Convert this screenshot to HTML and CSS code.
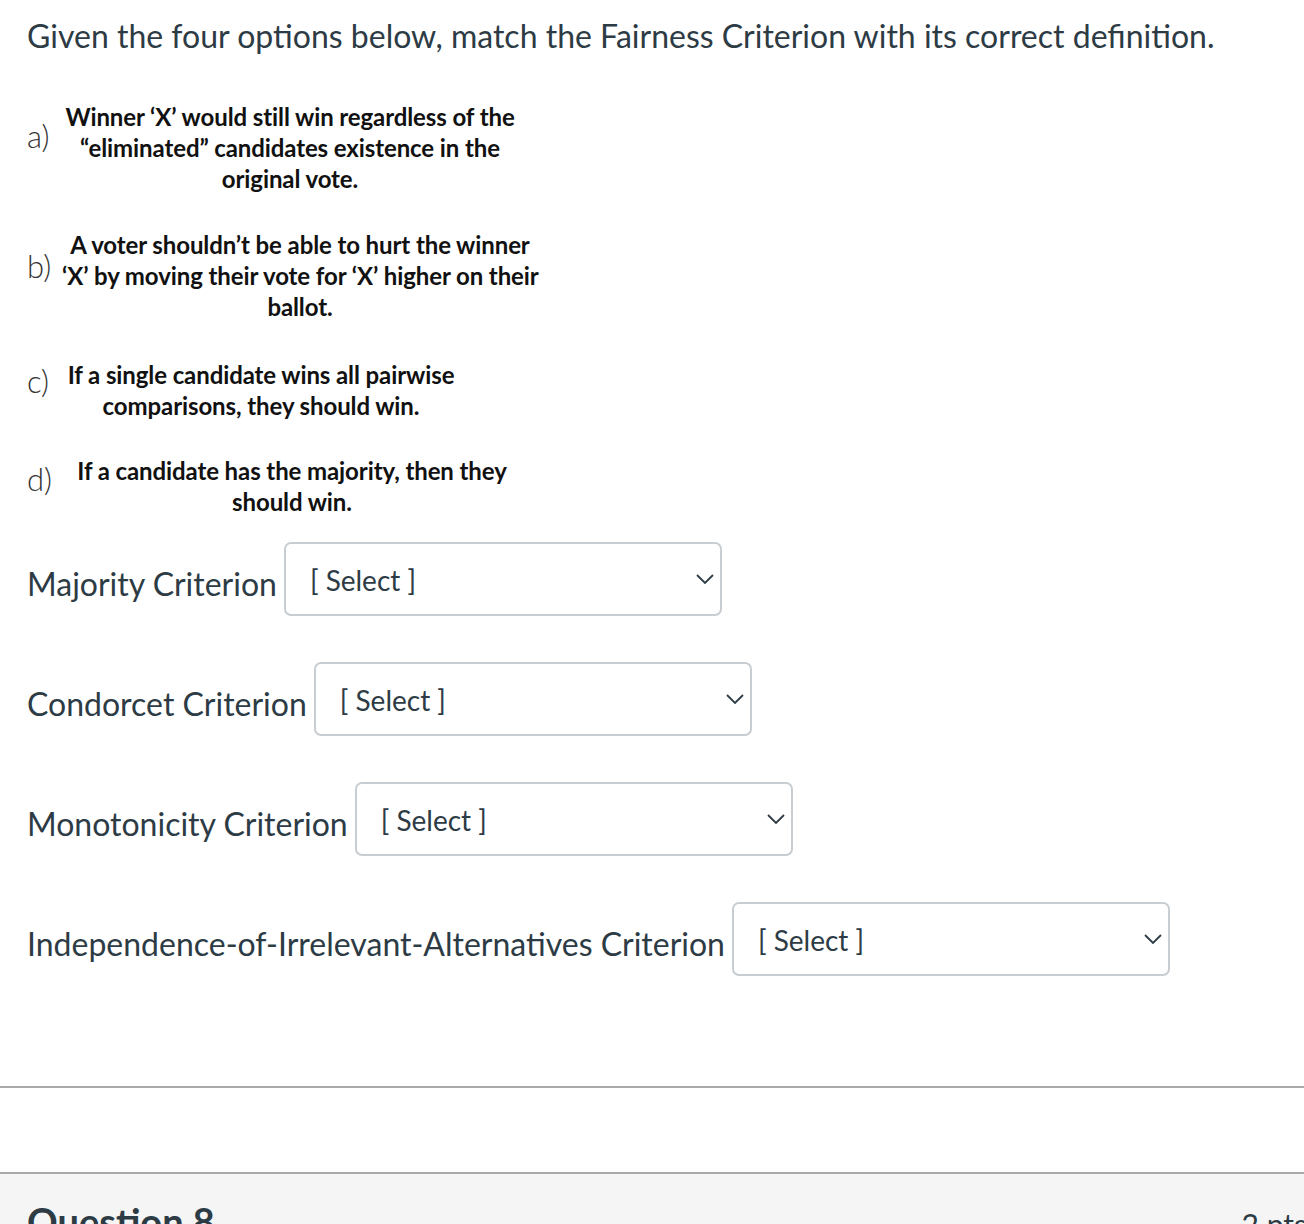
FILE: index.html
```html
<!DOCTYPE html>
<html lang="en">
<head>
<meta charset="utf-8">
<title>Question 7</title>
<link rel="stylesheet" href="styles.css">
</head>
<body>
<div class="page">
  <section class="question">
    <p class="prompt">Given the four options below, match the Fairness Criterion with its correct definition.</p>

    <div class="defs">
      <div class="def def-a">
        <span class="def-label">a)</span>
        <div class="def-text">Winner ‘X’ would still win regardless of the<br>“eliminated” candidates existence in the<br>original vote.</div>
      </div>
      <div class="def def-b">
        <span class="def-label">b)</span>
        <div class="def-text">A voter shouldn’t be able to hurt the winner<br>‘X’ by moving their vote for ‘X’ higher on their<br>ballot.</div>
      </div>
      <div class="def def-c">
        <span class="def-label">c)</span>
        <div class="def-text">If a single candidate wins all pairwise<br>comparisons, they should win.</div>
      </div>
      <div class="def def-d">
        <span class="def-label">d)</span>
        <div class="def-text">If a candidate has the majority, then they<br>should win.</div>
      </div>
    </div>

    <div class="matches">
      <div class="match">
        <span class="match-label">Majority Criterion</span>
        <div class="select"><span class="select-value">[ Select ]</span><svg class="chev" width="18" height="10" viewBox="0 0 18 10"><path d="M1 1 L9 9 L17 1" fill="none" stroke="#2d3b45" stroke-width="1.8"/></svg></div>
      </div>
      <div class="match">
        <span class="match-label">Condorcet Criterion</span>
        <div class="select"><span class="select-value">[ Select ]</span><svg class="chev" width="18" height="10" viewBox="0 0 18 10"><path d="M1 1 L9 9 L17 1" fill="none" stroke="#2d3b45" stroke-width="1.8"/></svg></div>
      </div>
      <div class="match">
        <span class="match-label">Monotonicity Criterion</span>
        <div class="select"><span class="select-value">[ Select ]</span><svg class="chev" width="18" height="10" viewBox="0 0 18 10"><path d="M1 1 L9 9 L17 1" fill="none" stroke="#2d3b45" stroke-width="1.8"/></svg></div>
      </div>
      <div class="match">
        <span class="match-label">Independence-of-Irrelevant-Alternatives Criterion</span>
        <div class="select"><span class="select-value">[ Select ]</span><svg class="chev" width="18" height="10" viewBox="0 0 18 10"><path d="M1 1 L9 9 L17 1" fill="none" stroke="#2d3b45" stroke-width="1.8"/></svg></div>
      </div>
    </div>
  </section>

  <div class="footer-rule"></div>
  <div class="gap-band"></div>

  <section class="next">
    <div class="next-header">
      <span class="next-title">Question 8</span>
      <span class="next-points">2 pts</span>
    </div>
  </section>
</div>
</body>
</html>
```

FILE: styles.css
```css
html, body {
  margin: 0;
  padding: 0;
  background: #ffffff;
  overflow: hidden;
}

body {
  font-family: Lato, "Open Sans", "Liberation Sans", sans-serif;
  color: #2d3b45;
}

.page {
  width: 1304px;
}

.question {
  padding: 0 27px;
}

.prompt {
  margin: 13px 0 0;
  font-size: 32px;
  line-height: 45px;
  white-space: nowrap;
}

.defs {
  margin-top: 43px;
  display: flex;
  flex-direction: column;
}

.def {
  display: flex;
  align-items: flex-start;
}

.def-label {
  width: 35px;
  flex: none;
  font-size: 31px;
  font-weight: 300;
  line-height: 31px;
  color: #333333;
}

.def-text {
  font-size: 24px;
  font-weight: 700;
  line-height: 31px;
  color: #111111;
  text-align: center;
  white-space: nowrap;
  letter-spacing: -0.1px;
}

.def-a { margin-bottom: 35px; }
.def-a .def-label { margin-top: 20px; }
.def-a .def-text { width: 456px; }

.def-b { margin-bottom: 37px; }
.def-b .def-label { margin-top: 22px; }
.def-b .def-text { width: 476px; }

.def-c { margin-bottom: 34px; }
.def-c .def-label { margin-top: 7px; }
.def-c .def-text { width: 414px; margin-left: -8px; }

.def-d .def-label { margin-top: 9px; }
.def-d .def-text { width: 460px; }

.matches {
  margin-top: 25px;
  display: flex;
  flex-direction: column;
  gap: 46px;
}

.match {
  display: flex;
  align-items: flex-start;
  gap: 7px;
}

.match-label {
  font-size: 32px;
  line-height: 45px;
  margin-top: 19px;
  white-space: nowrap;
}

.select {
  box-sizing: border-box;
  width: 438px;
  height: 74px;
  border: 2px solid #c8cdd1;
  border-radius: 7px;
  background: #ffffff;
  display: flex;
  justify-content: space-between;
  padding: 19px 6px 0 24px;
}

.select-value {
  font-size: 28px;
  line-height: 34px;
  align-self: flex-start;
}

.chev {
  align-self: center;
  margin-top: -19px;
}

.footer-rule {
  margin-top: 110px;
  height: 2px;
  background: #a9a9a9;
}

.gap-band {
  height: 84px;
  background: #ffffff;
  border-bottom: 2px solid #a9a9a9;
}

.next {
  background: #f5f5f5;
  height: 200px;
  padding: 0 27px;
}

.next-header {
  width: 1280px;
  display: flex;
  justify-content: space-between;
  align-items: baseline;
  padding-top: 24px;
}

.next-title {
  font-size: 38px;
  font-weight: 700;
  line-height: 46px;
}

.next-points {
  font-size: 30px;
  font-weight: 400;
}
```
